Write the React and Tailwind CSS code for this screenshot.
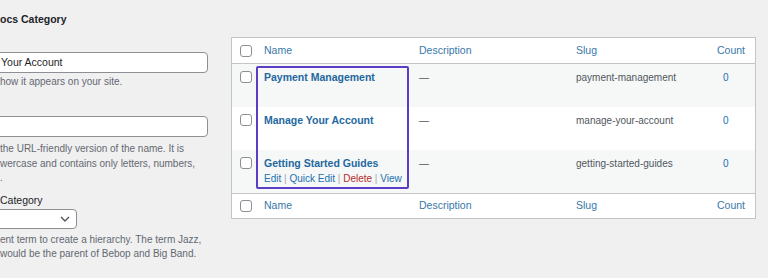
import React from 'react';

const rows = [
  { name: 'Payment Management', slug: 'payment-management', striped: true },
  { name: 'Manage Your Account', slug: 'manage-your-account', striped: false },
  { name: 'Getting Started Guides', slug: 'getting-started-guides', striped: true, actions: true },
];

const Checkbox = () => (
  <span className="block w-[12px] h-[12px] rounded-[3px] border border-[#8c8f94] bg-white" />
);

const HeaderRow = ({ footer }) => (
  <div
    className={`grid grid-cols-[32px_155px_157px_141px_1fr] items-center text-[10.5px] text-[#3778a9] ${
      footer ? 'h-[25px] border-t border-[#c3c4c7]' : 'h-[26px] border-b border-[#c3c4c7]'
    }`}
  >
    <div className="pl-[8px]"><Checkbox /></div>
    <div>Name</div>
    <div>Description</div>
    <div>Slug</div>
    <div>Count</div>
  </div>
);

const App = () => {
  return (
    <div
      className="w-[768px] h-[278px] overflow-hidden bg-[#f0f0f1] flex"
      style={{ fontFamily: '"Liberation Sans", Arial, sans-serif' }}
    >
      {/* Add term form (left, cut off) */}
      <div className="w-[208px] shrink-0 overflow-hidden text-[#1d2327]">
        <h2 className="mt-[12px] h-[14px] leading-[14px] text-[10.5px] font-bold">ocs Category</h2>

        <div className="mt-[26px] -ml-[8px] w-[216px] h-[21px] pl-[8px] flex items-center bg-white border border-[#8c8f94] rounded-[4px] text-[10.5px]">
          Your Account
        </div>
        <p className="mt-[2px] leading-[14px] text-[10px] text-[#646970]">how it appears on your site.</p>

        <div className="mt-[27px] -ml-[8px] w-[216px] h-[21px] bg-white border border-[#8c8f94] rounded-[4px]" />
        <p className="mt-[5px] leading-[14.5px] text-[10px] text-[#646970]">
          the URL-friendly version of the name. It is
          <br />
          wercase and contains only letters, numbers,
          <br />.
        </p>

        <div className="mt-[7px] h-[14px] leading-[14px] text-[10.5px]">Category</div>
        <div className="mt-[2px] -ml-[8px] w-[85px] h-[20px] bg-white border border-[#8c8f94] rounded-[4px] flex items-center justify-end pr-[6px]">
          <svg width="10" height="6" viewBox="0 0 10 6" fill="none">
            <path d="M1 1l4 4 4-4" stroke="#50575e" strokeWidth="1.4" />
          </svg>
        </div>
        <p className="mt-[4px] leading-[14px] text-[10px] text-[#646970]">
          ent term to create a hierarchy. The term Jazz,
          <br />
          would be the parent of Bebop and Big Band.
        </p>
      </div>

      {/* Terms table */}
      <div className="ml-[23px] mt-[37px] w-[525px] self-start relative bg-white border border-[#c3c4c7]">
        <HeaderRow />
        {rows.map((r) => (
          <div
            key={r.slug}
            className={`grid grid-cols-[32px_155px_157px_141px_1fr] h-[43px] pt-[7px] ${
              r.striped ? 'bg-[#f6f7f7]' : 'bg-white'
            }`}
          >
            <div className="pl-[8px]"><Checkbox /></div>
            <div>
              <div className="text-[10.5px] font-bold leading-[13px] text-[#2468a0]">{r.name}</div>
              {r.actions && (
                <div className="mt-[3px] text-[10px] leading-[12px] text-[#2271b1]">
                  Edit <span className="text-[#a7aaad]">|</span> Quick Edit{' '}
                  <span className="text-[#a7aaad]">|</span>{' '}
                  <span className="text-[#b32d2e]">Delete</span>{' '}
                  <span className="text-[#a7aaad]">|</span> View
                </div>
              )}
            </div>
            <div className="text-[10px] leading-[13px] text-[#50575e]">—</div>
            <div className="text-[10px] leading-[13px] text-[#50575e]">{r.slug}</div>
            <div className="pl-[6px] text-[10px] leading-[13px] text-[#2271b1]">0</div>
          </div>
        ))}
        <HeaderRow footer />

        {/* highlight box */}
        <div className="absolute left-[24px] top-[28px] w-[153px] h-[123px] border-2 border-[#5b3cc4] rounded-[2px] pointer-events-none" />
      </div>
    </div>
  );
};

export default App;
